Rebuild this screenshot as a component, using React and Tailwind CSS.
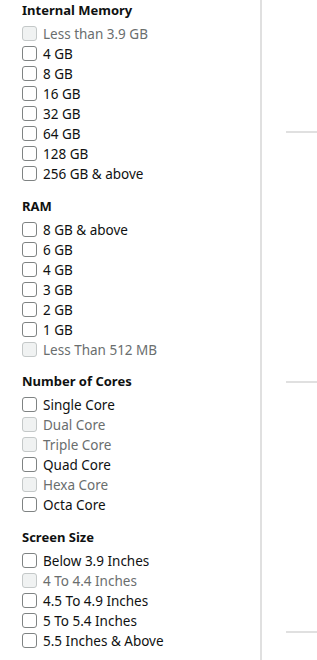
import React from "react";

const sections = [
  {
    title: "Internal Memory",
    gap: "mb-[13px]",
    items: [
      ["Less than 3.9 GB", true],
      ["4 GB"],
      ["8 GB"],
      ["16 GB"],
      ["32 GB"],
      ["64 GB"],
      ["128 GB"],
      ["256 GB & above"],
    ],
  },
  {
    title: "RAM",
    gap: "mb-[12px]",
    items: [
      ["8 GB & above"],
      ["6 GB"],
      ["4 GB"],
      ["3 GB"],
      ["2 GB"],
      ["1 GB"],
      ["Less Than 512 MB", true],
    ],
  },
  {
    title: "Number of Cores",
    gap: "mb-[13px]",
    items: [
      ["Single Core"],
      ["Dual Core", true],
      ["Triple Core", true],
      ["Quad Core"],
      ["Hexa Core", true],
      ["Octa Core"],
    ],
  },
  {
    title: "Screen Size",
    gap: "",
    items: [
      ["Below 3.9 Inches"],
      ["4 To 4.4 Inches", true],
      ["4.5 To 4.9 Inches"],
      ["5 To 5.4 Inches"],
      ["5.5 Inches & Above"],
    ],
  },
];

function Row({ label, disabled }) {
  return (
    <div className="flex h-[20px] items-center gap-[6px]">
      <span
        className={
          disabled
            ? "block h-[15px] w-[15px] rounded-[3px] border border-[#c4c8c8] bg-[#f0f2f2]"
            : "block h-[15px] w-[15px] rounded-[3px] border border-[#7f8383] bg-white"
        }
      />
      <span
        className={
          disabled
            ? "mt-[2px] text-[13.5px] text-[#6a6e6e]"
            : "mt-[2px] text-[13.5px] text-[#0f1111]"
        }
      >
        {label}
      </span>
    </div>
  );
}

export default function App() {
  return (
    <div
      className="flex h-[660px] w-[317px] overflow-hidden bg-white text-[14px] leading-[20px]"
      style={{ fontFamily: '"Noto Sans", "Liberation Sans", sans-serif' }}
    >
      <div className="w-[260px] shrink-0 pl-[22px]">
        {sections.map((s) => (
          <div key={s.title} className={s.gap}>
            <div className="mb-[3px] h-[20px] text-[13px] font-bold text-[#0f1111]">{s.title}</div>
            {s.items.map(([label, disabled]) => (
              <Row key={label} label={label} disabled={disabled} />
            ))}
          </div>
        ))}
      </div>
      <div className="h-full w-[2px] shrink-0 bg-[#e0e0e0]" />
      <div className="flex flex-1 flex-col pl-[24px] pt-[131px]">
        <div className="h-[2px] w-full bg-[#e0e0e0]" />
        <div className="mt-[248px] h-[2px] w-full bg-[#e0e0e0]" />
        <div className="mt-[248px] h-[2px] w-full bg-[#e0e0e0]" />
      </div>
    </div>
  );
}
